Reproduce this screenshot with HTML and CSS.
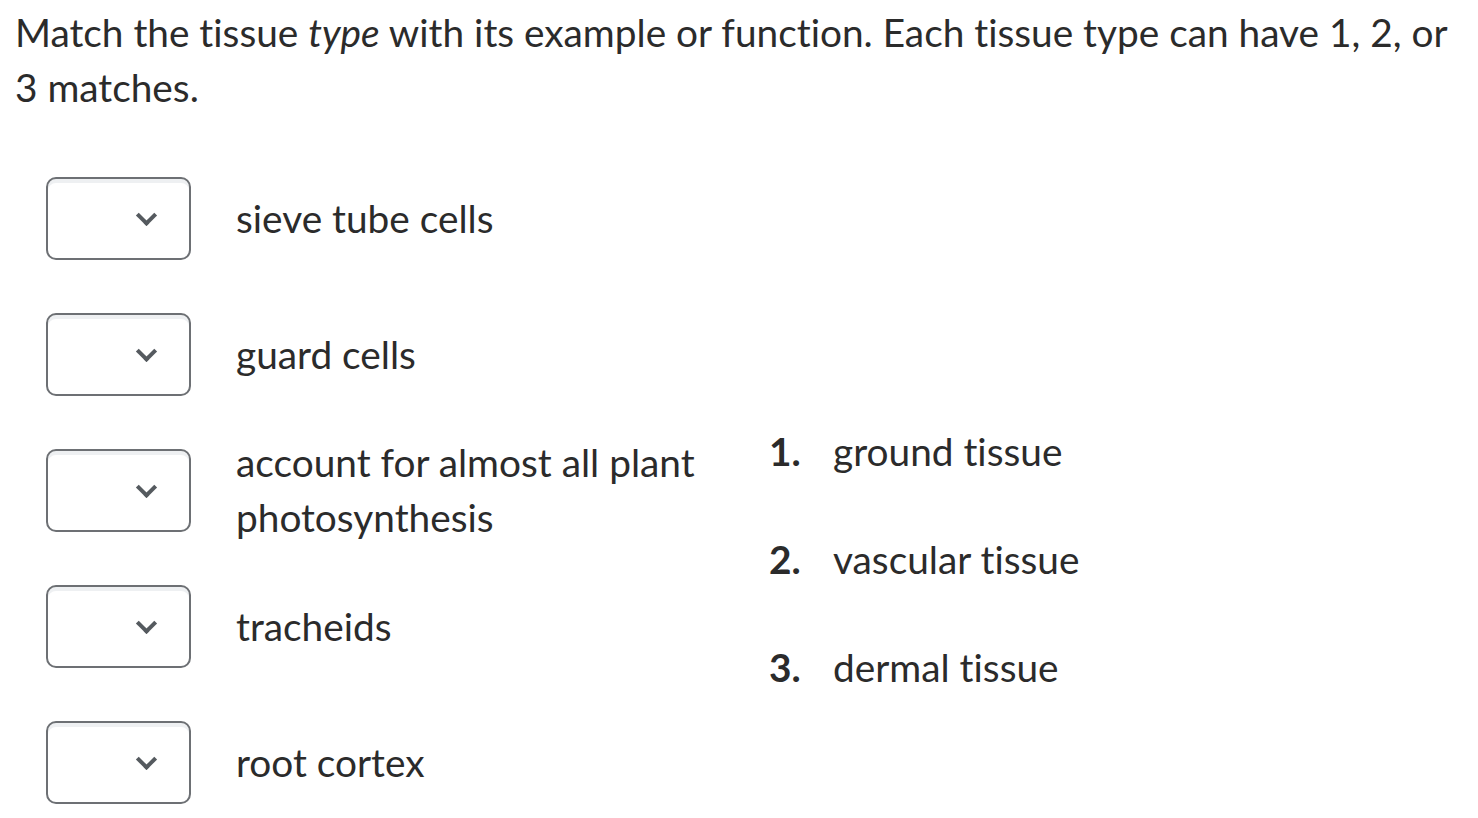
FILE: index.html
```html
<!DOCTYPE html>
<html lang="en">
<head>
    <meta charset="UTF-8">
    <title>Matching question</title>
    <link rel="stylesheet" href="styles.css">
</head>
<body>
    <p class="question">Match the tissue <em>type</em> with its example or function. Each tissue type can have 1, 2, or 3 matches.</p>
    <div class="match">
        <div class="rows">
            <div class="row">
                <div class="select"><span class="chevron"></span></div>
                <div class="label">sieve tube cells</div>
            </div>
            <div class="row">
                <div class="select"><span class="chevron"></span></div>
                <div class="label">guard cells</div>
            </div>
            <div class="row">
                <div class="select"><span class="chevron"></span></div>
                <div class="label">account for almost all plant photosynthesis</div>
            </div>
            <div class="row">
                <div class="select"><span class="chevron"></span></div>
                <div class="label">tracheids</div>
            </div>
            <div class="row">
                <div class="select"><span class="chevron"></span></div>
                <div class="label">root cortex</div>
            </div>
        </div>
        <ol class="choices">
            <li><span class="num">1.</span>ground tissue</li>
            <li><span class="num">2.</span>vascular tissue</li>
            <li><span class="num">3.</span>dermal tissue</li>
        </ol>
    </div>
</body>
</html>
```

FILE: styles.css
```css
body {
    margin: 0;
    padding: 5px 15px 0 15px;
    background-color: #fff;
    color: #2b2b2b;
    font-family: Lato, "Open Sans", sans-serif;
    font-size: 38.8px;
    line-height: 55px;
    font-variant-ligatures: none;
}

.question {
    margin: 0;
    max-width: 1445px;
}

.match {
    display: flex;
    margin-top: 35px;
}

.rows {
    display: flex;
    flex-direction: column;
    width: 724px;
}

.row {
    display: flex;
    align-items: center;
    height: 136px;
}

.select {
    box-sizing: border-box;
    width: 145px;
    height: 83px;
    margin-left: 31px;
    border: 2px solid #6d7074;
    border-radius: 10px;
    box-shadow: inset 0 4px 0 #eef0f2;
    display: flex;
    align-items: center;
    justify-content: flex-end;
    padding-right: 35px;
}

.chevron {
    width: 11px;
    height: 11px;
    border-right: 4px solid #555a5f;
    border-bottom: 4px solid #555a5f;
    transform: rotate(45deg);
    margin-top: -6px;
}

.label {
    margin-left: 45px;
    width: 500px;
}

.choices {
    list-style: none;
    margin: 0;
    padding: 274px 0 0 30px;
}

.choices li {
    margin-bottom: 53px;
}

.num {
    display: inline-block;
    width: 64px;
    font-weight: bold;
}
```
